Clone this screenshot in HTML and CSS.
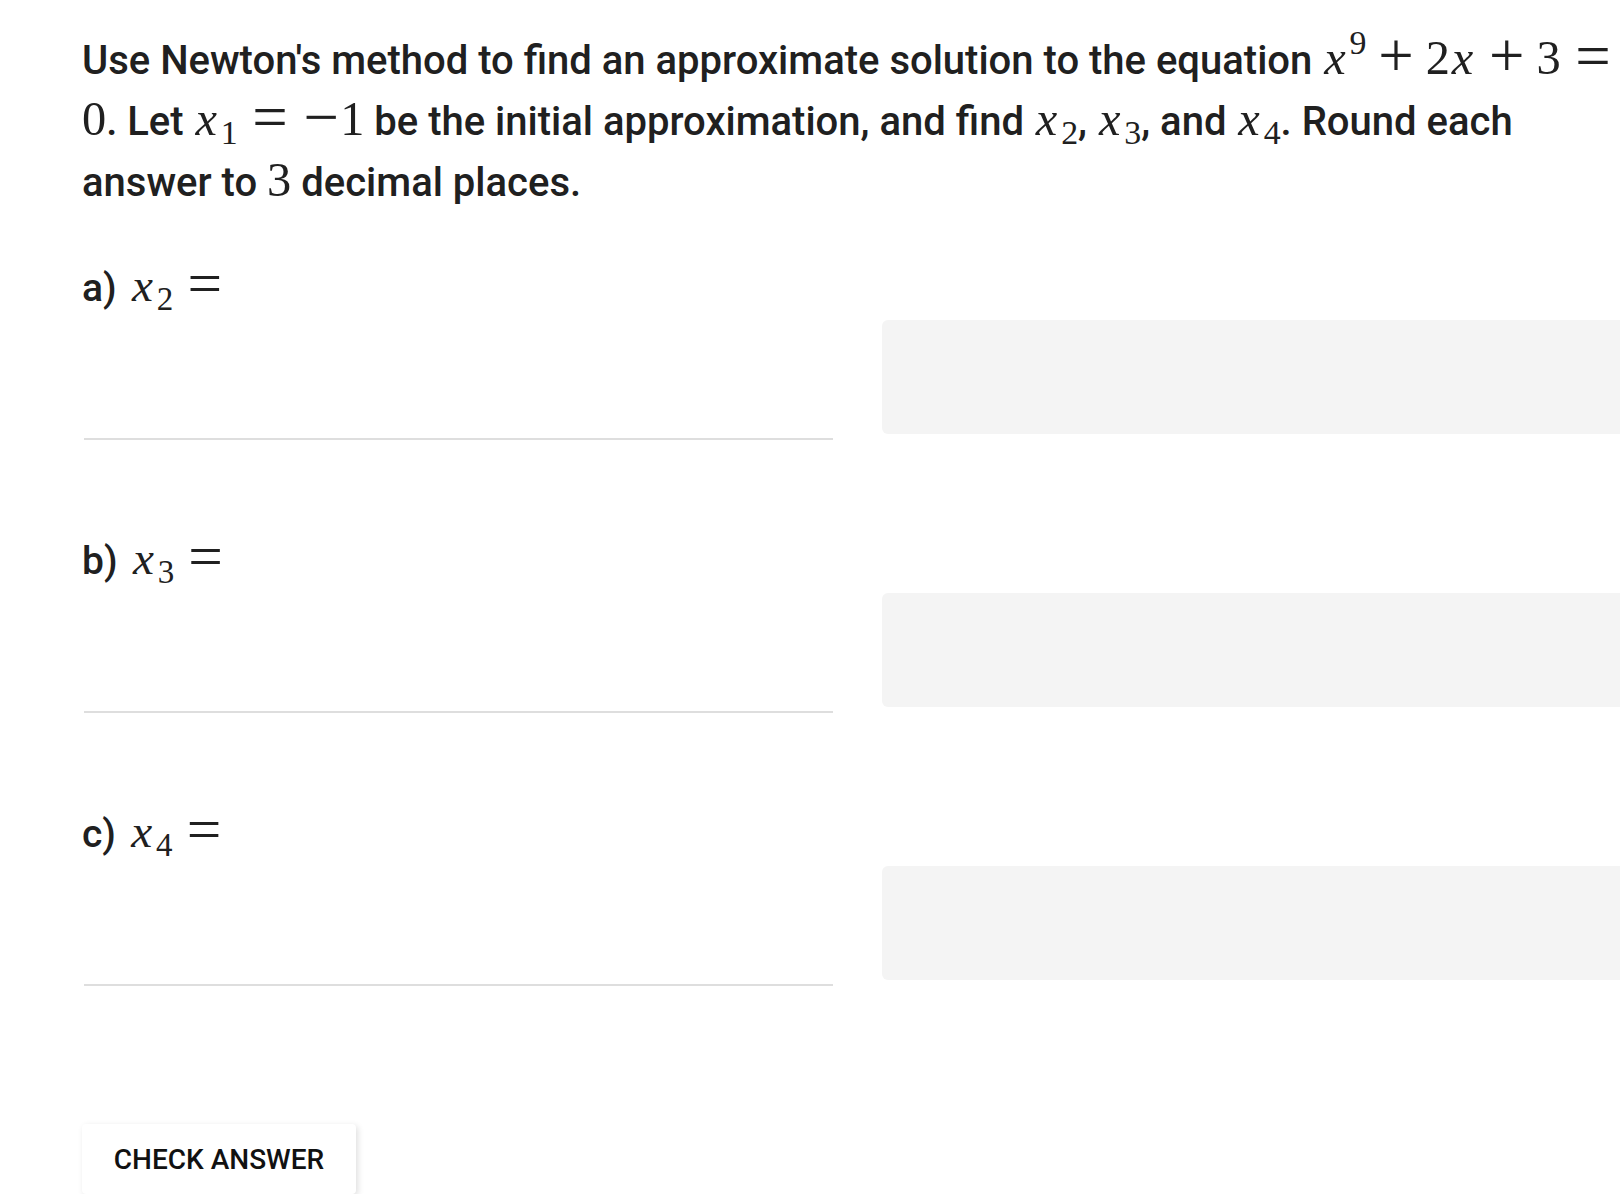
FILE: index.html
```html
<!DOCTYPE html>
<html lang="en">
<head>
<meta charset="utf-8">
<title>Newton's method</title>
<link rel="stylesheet" href="styles.css">
</head>
<body>
<main class="page">
  <p class="question">Use Newton's method to find an approximate solution to the equation <span class="m"><i>x</i><sup>9</sup><span class="op bin">+</span>2<i>x</i><span class="op bin">+</span>3<span class="op rel">=</span></span> <span class="m">0</span>. Let <span class="m"><i>x</i><sub>1</sub><span class="op rel">=</span><span class="op">−</span>1</span> be the initial approximation, and find <span class="m"><i>x</i><sub>2</sub></span>, <span class="m"><i>x</i><sub>3</sub></span>, and <span class="m"><i>x</i><sub>4</sub></span>. Round each answer to <span class="m">3</span> decimal places.</p>

  <section class="part">
    <div class="label">a) <span class="m"><i>x</i><sub>2</sub><span class="op rel">=</span></span></div>
    <div class="row">
      <input class="answer" type="text" aria-label="x2">
      <div class="feedback"></div>
    </div>
  </section>

  <section class="part">
    <div class="label">b) <span class="m"><i>x</i><sub>3</sub><span class="op rel">=</span></span></div>
    <div class="row">
      <input class="answer" type="text" aria-label="x3">
      <div class="feedback"></div>
    </div>
  </section>

  <section class="part">
    <div class="label">c) <span class="m"><i>x</i><sub>4</sub><span class="op rel">=</span></span></div>
    <div class="row">
      <input class="answer" type="text" aria-label="x4">
      <div class="feedback"></div>
    </div>
  </section>

  <button class="check" type="button">CHECK ANSWER</button>
</main>
</body>
</html>
```

FILE: styles.css
```css
html, body {
  margin: 0;
  padding: 0;
  background: #ffffff;
}

body {
  overflow: hidden;
  font-family: Roboto, "Liberation Sans", sans-serif;
  color: #202020;
}

.page {
  width: 1700px;
  padding: 30px 0 0 82px;
  box-sizing: border-box;
}

.question {
  margin: 0;
  width: 1570px;
  font-size: 40px;
  font-weight: 500;
  line-height: 61px;
}

.m {
  font-family: "Liberation Serif", "DejaVu Serif", serif;
  font-weight: 400;
  font-size: 1.21em;
  line-height: 0;
  white-space: nowrap;
}

.m i {
  font-style: italic;
  margin-left: 0.04em;
  margin-right: 0.08em;
}

.m sub,
.m sup {
  font-size: 0.7em;
  line-height: 0;
}

.m sub {
  vertical-align: -0.28em;
}

.m sup {
  vertical-align: 0.6em;
}

.op {
  display: inline-block;
  font-size: 1.3em;
  width: 0.6em;
  text-align: center;
  line-height: 0;
  vertical-align: -0.05em;
}

.bin {
  margin: 0 0.171em;
}

.rel {
  margin: 0 0.214em;
}

.part {
  margin-top: 50px;
}

.part + .part {
  margin-top: 96px;
}

.label {
  font-size: 39px;
  font-weight: 500;
  line-height: 50px;
  height: 50px;
}

.label .m i {
  margin-left: 0.12em;
}

.row {
  display: flex;
  align-items: flex-start;
  gap: 49px;
  margin-top: 7px;
}

.answer {
  display: block;
  width: 749px;
  height: 118px;
  margin: 0 0 0 2px;
  padding: 0;
  border: none;
  border-bottom: 2px solid #dedede;
  background: transparent;
  outline: none;
  font: inherit;
}

.feedback {
  width: 800px;
  height: 114px;
  background: #f4f4f4;
  border-radius: 6px;
}

.check {
  display: block;
  margin-top: 138px;
  width: 274px;
  height: 70px;
  padding: 0 30px;
  border: none;
  border-radius: 4px;
  background: #ffffff;
  box-shadow: 2px 2px 6px rgba(0, 0, 0, 0.13);
  font-family: Roboto, "Liberation Sans", sans-serif;
  font-size: 28px;
  font-weight: 500;
  color: #111111;
  cursor: pointer;
}
```
